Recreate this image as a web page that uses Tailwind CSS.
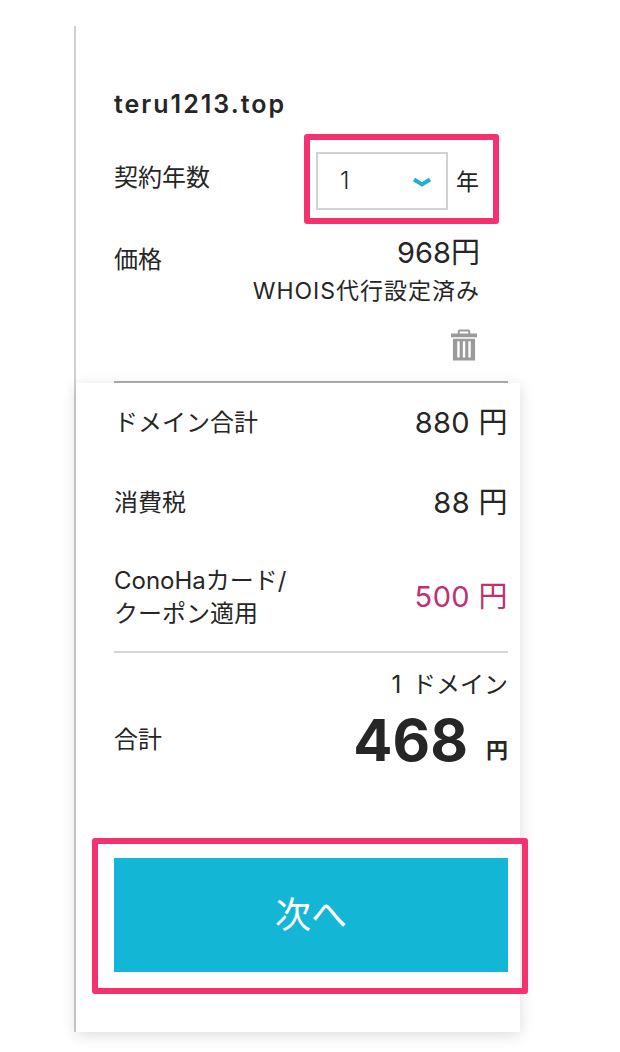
<!DOCTYPE html>
<html lang="ja">
<head>
  <meta charset="UTF-8" />
  <title>ドメイン契約</title>
  <script src="https://cdn.jsdelivr.net/npm/@tailwindcss/browser@4"></script>
</head>
<body class="bg-white text-[#262626] font-['Inter','Noto_Sans_CJK_JP',sans-serif]">
  <div class="w-[620px] h-[1052px] overflow-hidden pt-[26px] pl-[74px]">
    <div class="w-[446px] border-l-2 border-[#d0d0d0]">

      <!-- Domain section -->
      <div class="h-[357px] pl-[38px] w-[404px]">
        <div class="pt-[60px] text-[25px] leading-[36px] font-semibold tracking-[2px]">teru1213.top</div>

        <div class="flex mt-[30px] h-[66px]">
          <div class="w-[202px] text-[24px] leading-[36px] mt-[8px]">契約年数</div>
          <div class="relative flex items-start">
            <div class="w-[132px] h-[58px] border-2 border-[#d2d2d2] flex items-center justify-between pl-[22px] pr-[14px]">
              <span class="text-[24px] font-light">1</span>
              <svg width="20" height="12" viewBox="0 0 20 12" class="mt-[4px]"><path d="M2 2.500 L10 7.500 L18 2.500" fill="none" stroke="#22afd0" stroke-width="4"/></svg>
            </div>
            <span class="ml-[8px] mt-[12px] text-[23px] leading-[36px]">年</span>
            <div class="absolute left-[-12px] top-[-18px] w-[195px] h-[90px] border-[6px] border-[#f6316f] rounded-[3px]"></div>
          </div>
        </div>

        <div class="flex justify-between mt-[16px]">
          <div class="text-[24px] leading-[36px] mt-[8px]">価格</div>
          <div class="text-right">
            <div class="text-[29px] leading-[38px]">968円</div>
            <div class="text-[23px] leading-[38px] tracking-[1px]">WHOIS代行設定済み</div>
          </div>
        </div>

        <div class="flex justify-end mt-[19px] pr-[3px]">
          <svg width="26" height="32" viewBox="0 0 27 32" fill="#9a9a9a">
            <path d="M9 0h9a2 2 0 0 1 2 2v2h7v4H0V4h7V2a2 2 0 0 1 2-2zm0 2v2h9V2z" fill-rule="evenodd"/>
            <path d="M2 9.500h23V32H2zM6.500 12v17h2.500V12zm5.800 0v17h2.500V12zm5.700 0v17h2.500V12z" fill-rule="evenodd"/>
          </svg>
        </div>
      </div>

      <!-- Summary card -->
      <div class="bg-white h-[649px] pl-[38px] pr-[12px] shadow-[0_3px_14px_rgba(0,0,0,0.14)] w-[444px] relative">
        <div class="h-[2px] bg-[#a8a8a8] absolute left-[38px] right-[12px] top-[-2px]"></div>
        <div class="flex justify-between items-center h-[80px]">
          <span class="text-[24px]">ドメイン合計</span>
          <span class="text-[29px] tracking-[0.4px]">880 円</span>
        </div>
        <div class="flex justify-between items-center h-[80px]">
          <span class="text-[24px]">消費税</span>
          <span class="text-[29px] tracking-[0.4px]">88 円</span>
        </div>
        <div class="flex justify-between items-center h-[108px]">
          <span class="text-[24px] leading-[33px]">ConoHaカード/<br />クーポン適用</span>
          <span class="text-[29px] tracking-[0.4px] text-[#c1306f]">500 円</span>
        </div>
        <div class="h-[2px] bg-[#d6d6d6]"></div>
        <div class="text-right text-[24px] leading-[36px] mt-[14px]"><span class="mr-[4px]">1</span> ドメイン</div>
        <div class="flex justify-between items-center mt-[4px] h-[66px]">
          <span class="text-[24px]">合計</span>
          <span class="flex items-center font-bold">
            <span class="text-[58px] leading-[66px]">468</span>
            <span class="text-[22px] ml-[18px] mt-[20px] font-bold">円</span>
          </span>
        </div>

        <div class="relative mt-[85px]">
          <button class="block w-full h-[114px] bg-[#14b6d6] text-white text-[36px]">次へ</button>
          <div class="absolute left-[-22px] right-[-20px] top-[-20px] bottom-[-22px] border-[6px] border-[#f6316f] rounded-[3px]"></div>
        </div>
      </div>
    </div>
  </div>
</body>
</html>
